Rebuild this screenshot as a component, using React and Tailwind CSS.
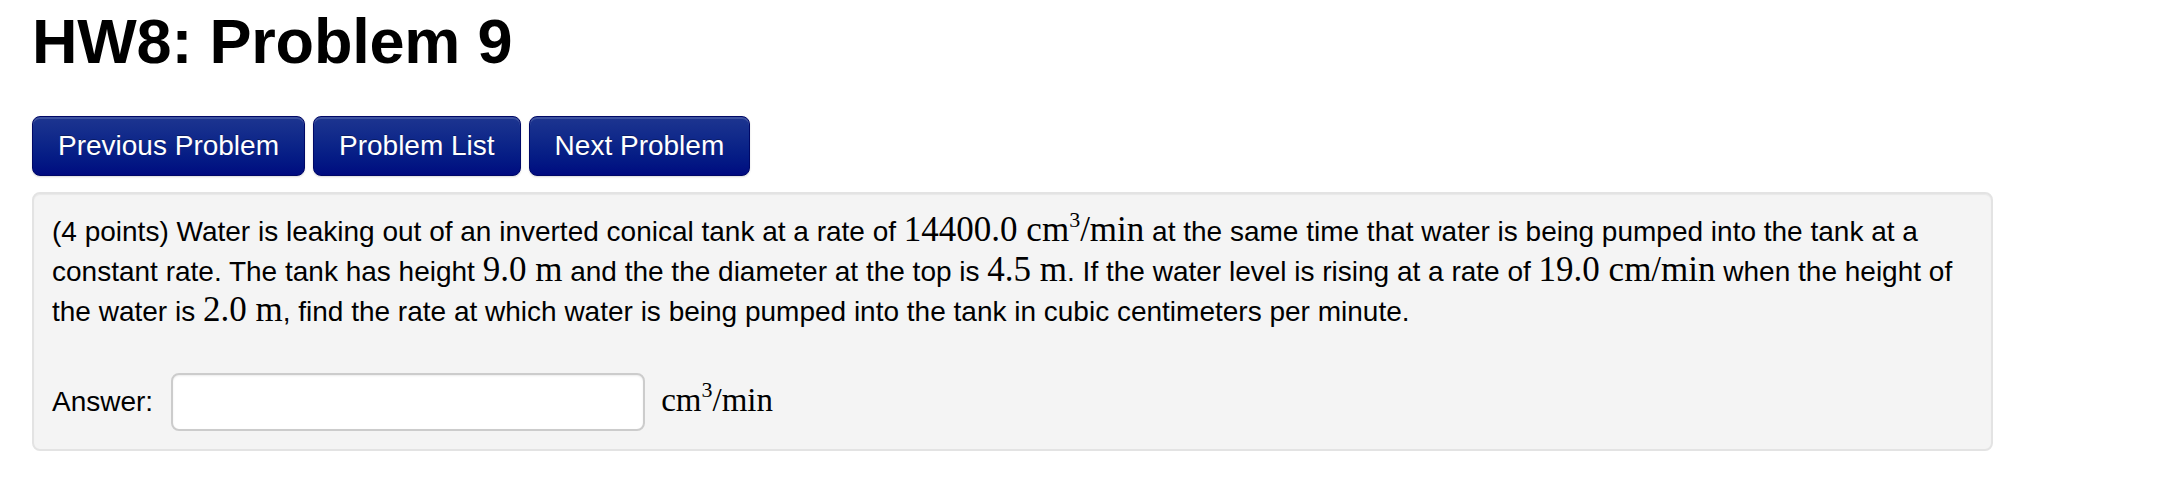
const NAV = ['Previous Problem', 'Problem List', 'Next Problem']

function M({ children, size = 'text-[35px]' }) {
  return <span className={`font-['Liberation_Serif',serif] leading-none ${size}`}>{children}</span>
}

function Cube() {
  return <sup className="text-[22px] relative -top-[14px] leading-none">3</sup>
}

export default function App() {
  return (
    <div className="min-h-screen bg-white px-[32px] font-['Liberation_Sans',Arial,sans-serif] text-black">
      <h1 className="pt-[6px] text-[63px] leading-[70px] font-bold tracking-[-0.2px]">HW8: Problem 9</h1>

      <div className="mt-[40px] flex gap-[8px]">
        {NAV.map(label => (
          <button
            key={label}
            className="h-[60px] px-[25px] rounded-[8px] border border-[#000866] bg-gradient-to-b from-[#1d3590] to-[#000a80] text-white text-[28px] leading-none shadow-[inset_0_2px_0_rgba(255,255,255,0.15),0_1px_2px_rgba(0,0,0,0.15)] [text-shadow:0_-1px_0_rgba(0,0,0,0.3)]"
          >
            {label}
          </button>
        ))}
      </div>

      <div className="mt-[16px] w-[1961px] rounded-[8px] border-2 border-[#e3e3e3] bg-[#f4f4f4] p-[18px] shadow-[inset_0_1px_1px_rgba(0,0,0,0.05)]">
        <p className="text-[28px] leading-[40px]">
          (4 points) Water is leaking out of an inverted conical tank at a rate of <M>14400.0 cm<Cube />/min</M> at the
          same time that water is being pumped into the tank at a constant rate. The tank has height <M>9.0 m</M> and
          the the diameter at the top is <M>4.5 m</M>. If the water level is rising at a rate of <M>19.0 cm/min</M> when
          the height of the water is <M>2.0 m</M>, find the rate at which water is being pumped into the tank in cubic
          centimeters per minute.
        </p>

        <div className="mt-[41px] flex items-center text-[28px]">
          <span>Answer:</span>
          <input
            type="text"
            className="ml-[18px] h-[58px] w-[474px] rounded-[8px] border-2 border-[#cccccc] bg-white shadow-[inset_0_1px_2px_rgba(0,0,0,0.08)] outline-none"
          />
          <span className="ml-[16px]">
            <M size="text-[33px]">cm<Cube />/min</M>
          </span>
        </div>
      </div>
    </div>
  )
}
